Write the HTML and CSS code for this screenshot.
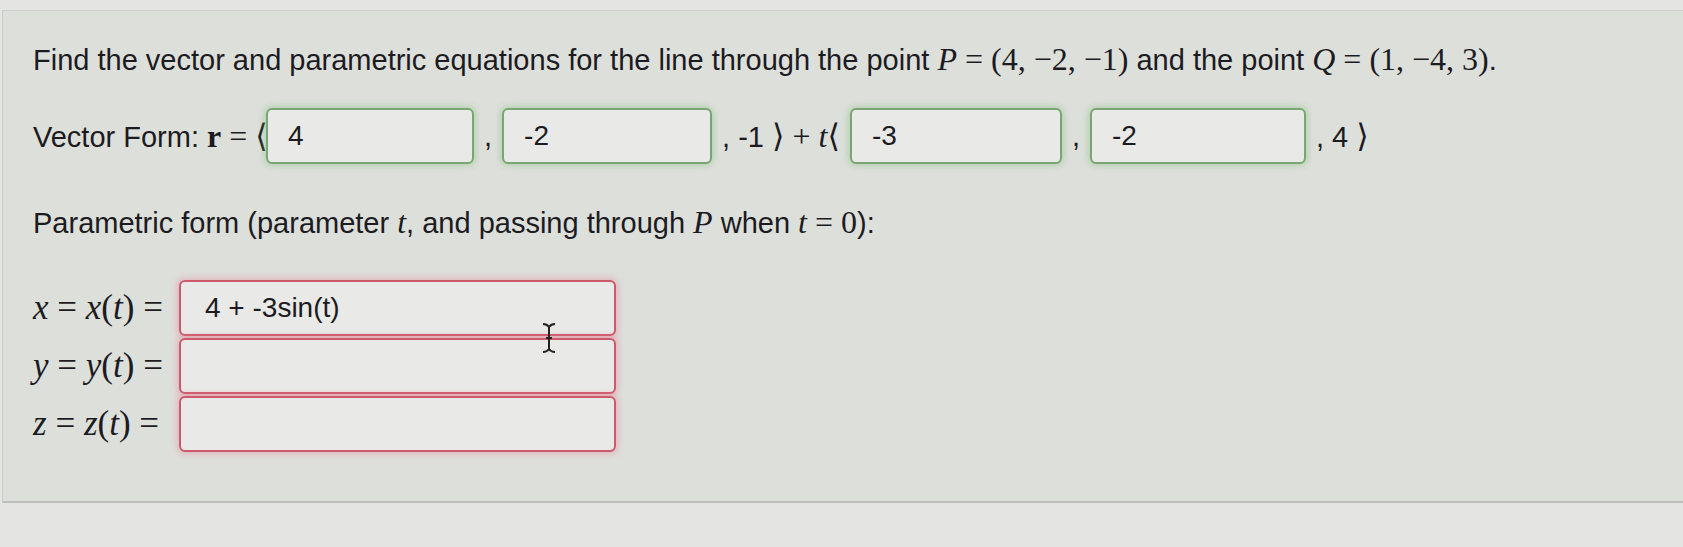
FILE: index.html
```html
<!DOCTYPE html>
<html lang="en">
<head>
    <meta charset="UTF-8">
    <title>Vector and parametric equations</title>
    <link rel="stylesheet" href="styles.css">
</head>
<body>

<div class="panel">
    <p class="question">
        Find the vector and parametric equations for the line through the point
        <span class="math"><i>P</i> = (4, −2, −1)</span>
        and the point
        <span class="math"><i>Q</i> = (1, −4, 3)</span>.
    </p>

    <!-- Vector form -->
    <div class="vector-row">
        <span class="label">Vector Form: <span class="math"><b>r</b> = ⟨</span></span>
        <div class="answer ok box1">4</div>
        <span class="sep">,</span>
        <div class="answer ok box2">-2</div>
        <span class="sep">, -1 <span class="math">⟩ + <i>t</i>⟨</span></span>
        <div class="answer ok box3">-3</div>
        <span class="sep">,</span>
        <div class="answer ok box4">-2</div>
        <span class="sep">, 4 <span class="math">⟩</span></span>
    </div>

    <p class="question param">
        Parametric form (parameter <span class="math"><i>t</i></span>, and passing through
        <span class="math"><i>P</i></span> when <span class="math"><i>t</i> = 0</span>):
    </p>

    <!-- Parametric form -->
    <div class="param-grid">
        <span class="math eq"><i>x</i> = <i>x</i>(<i>t</i>) =</span>
        <div class="answer bad">4 + -3sin(t)</div>
        <span class="math eq"><i>y</i> = <i>y</i>(<i>t</i>) =</span>
        <div class="answer bad"></div>
        <span class="math eq"><i>z</i> = <i>z</i>(<i>t</i>) =</span>
        <div class="answer bad"></div>

        <svg class="cursor" width="16" height="32" viewBox="0 0 16 32">
            <path d="M2 2 Q6 2 8 5 Q10 2 14 2 M8 5 V27 M5 16 H11 M2 30 Q6 30 8 27 Q10 30 14 30"
                  fill="none" stroke="#222" stroke-width="2"/>
        </svg>
    </div>
</div>

</body>
</html>
```

FILE: styles.css
```css
body {
    margin: 0;
    padding: 0;
    background-color: #e4e5e2;
    font-family: "Liberation Sans", Arial, sans-serif;
    color: #1c1b22;
}
.panel {
    margin: 10px 0 0 2px;
    height: 493px;
    padding: 31px 0 0 30px;
    box-sizing: border-box;
    background-color: #dddfdb;
    border-top: 1px solid #cdcecb;
    border-left: 1px solid #cdcecb;
    border-bottom: 2px solid #bdbebb;
}
.question {
    margin: 0;
    font-size: 29px;
    line-height: 34px;
}
.math {
    font-family: "Liberation Serif", "DejaVu Serif", serif;
    font-size: 32px;
}
.math i {
    font-style: italic;
}
.math b {
    font-weight: bold;
}
.vector-row {
    display: flex;
    align-items: center;
    margin-top: 30px;
    height: 58px;
    font-size: 29px;
}
.label {
    width: 233px;
    white-space: nowrap;
}
.sep {
    padding: 0 10px;
    white-space: nowrap;
}
.answer {
    box-sizing: border-box;
    height: 56px;
    padding: 0 20px;
    display: flex;
    align-items: center;
    font-size: 28px;
    background-color: #e9eae7;
    border-radius: 6px;
}
.answer.ok {
    border: 2px solid #78a572;
    box-shadow: 0 0 6px 2px rgba(130, 195, 120, 0.45);
}
.answer.bad {
    border: 2px solid #cc5a6c;
    box-shadow: 0 0 6px 2px rgba(230, 120, 140, 0.4);
    padding-left: 24px;
}
.box1 { width: 208px; }
.box2 { width: 210px; }
.box3 { width: 212px; }
.box4 { width: 216px; }
.param {
    margin-top: 40px;
}
.param-grid {
    position: relative;
    display: grid;
    grid-template-columns: 146px 437px;
    row-gap: 2px;
    margin-top: 40px;
    align-items: center;
}
.eq {
    font-size: 35px;
    white-space: nowrap;
}
.cursor {
    position: absolute;
    left: 508px;
    top: 42px;
}
```
